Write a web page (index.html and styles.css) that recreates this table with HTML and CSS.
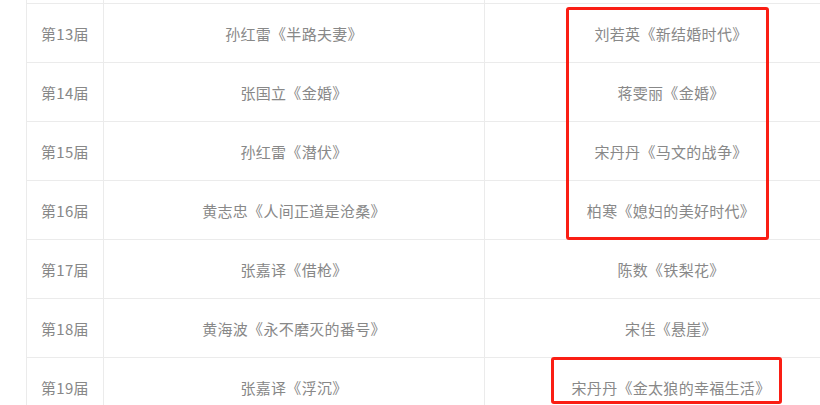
FILE: index.html
```html
<!DOCTYPE html>
<html lang="zh-CN">
<head>
  <meta charset="UTF-8">
  <meta name="viewport" content="width=device-width, initial-scale=1.0">
  <title>获奖名单</title>
  <link rel="stylesheet" href="styles.css">
</head>
<body>
  <div class="award-wrap">
    <table class="award-table">
      <colgroup>
        <col class="col-no">
        <col class="col-actor">
        <col class="col-actress">
      </colgroup>
      <tr><td></td><td></td><td></td></tr>
      <tr><td>第13届</td><td>孙红雷《半路夫妻》</td><td>刘若英《新结婚时代》</td></tr>
      <tr><td>第14届</td><td>张国立《金婚》</td><td>蒋雯丽《金婚》</td></tr>
      <tr><td>第15届</td><td>孙红雷《潜伏》</td><td>宋丹丹《马文的战争》</td></tr>
      <tr><td>第16届</td><td>黄志忠《人间正道是沧桑》</td><td>柏寒《媳妇的美好时代》</td></tr>
      <tr><td>第17届</td><td>张嘉译《借枪》</td><td>陈数《铁梨花》</td></tr>
      <tr><td>第18届</td><td>黄海波《永不磨灭的番号》</td><td>宋佳《悬崖》</td></tr>
      <tr><td>第19届</td><td>张嘉译《浮沉》</td><td>宋丹丹《金太狼的幸福生活》</td></tr>
    </table>

    <!-- 红框标注 -->
    <div class="mark mark-a"></div>
    <div class="mark mark-b"></div>
  </div>
</body>
</html>
```

FILE: styles.css
```css
* {
  margin: 0;
  padding: 0;
  box-sizing: border-box;
}

html, body {
  width: 820px;
  height: 405px;
  overflow: hidden;
}

body {
  font-family: "Noto Sans CJK SC", "Noto Sans", sans-serif;
  background-color: #fff;
  color: #888;
  font-size: 15px;
}

.award-wrap {
  position: relative;
  height: 405px;
  overflow: hidden;
  padding-left: 26px;
}

.award-table {
  margin-top: -56px;
  width: 831px;
  table-layout: fixed;
  border-collapse: collapse;
}

.col-no {
  width: 77px;
}

.col-actor {
  width: 381px;
}

.col-actress {
  width: 373px;
}

.award-table td {
  height: 59px;
  border: 1px solid #ebebeb;
  text-align: center;
  vertical-align: middle;
  white-space: nowrap;
  text-spacing-trim: space-all;
  letter-spacing: 0.3px;
}

/* 红框 */
.mark {
  position: absolute;
  border: 3px solid #fa1e14;
  border-radius: 3px;
}

.mark-a {
  left: 566px;
  top: 7px;
  width: 203px;
  height: 233px;
}

.mark-b {
  left: 551px;
  top: 357px;
  width: 231px;
  height: 47px;
}
```
